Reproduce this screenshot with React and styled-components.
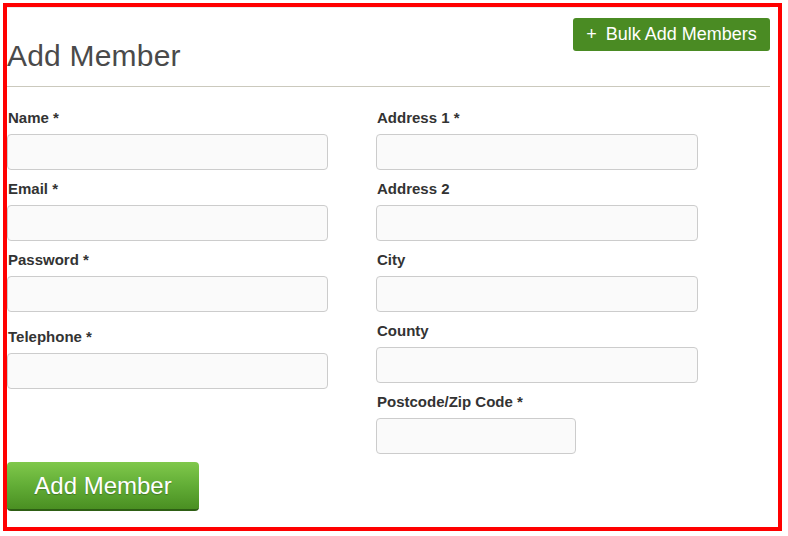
import React from "react";
import styled, { createGlobalStyle } from "styled-components";

const GlobalStyle = createGlobalStyle`
  html, body {
    margin: 0;
    padding: 0;
    background: #fff;
  }
  body {
    font-family: "Liberation Sans", Arial, Helvetica, sans-serif;
    color: #333;
  }
`;

const Frame = styled.div`
  margin: 3px;
  width: 779px;
  height: 528px;
  box-sizing: border-box;
  border: 4px solid #ff0000;
  overflow: hidden;
`;

const Content = styled.div`
  width: 763px;
  border-top: 1px solid #ececec;
`;

const Header = styled.div`
  display: flex;
  justify-content: space-between;
  align-items: flex-start;
  height: 78px;
  border-bottom: 1px solid #cbc9bd;
`;

const Title = styled.h1`
  align-self: flex-end;
  margin: 0 0 15px 0;
  font-size: 30px;
  line-height: 30px;
  font-weight: 300;
  color: #4a4a4a;
  letter-spacing: 0.2px;
`;

const BulkButton = styled.button`
  margin-top: 10px;
  width: 197px;
  height: 33px;
  padding: 0;
  border: none;
  border-radius: 3px;
  background: #4a8b23;
  color: #fff;
  font-family: "Liberation Sans", Arial, sans-serif;
  font-size: 18px;
  display: flex;
  align-items: center;
  justify-content: center;
  cursor: pointer;
`;

const Plus = styled.span`
  margin-right: 9px;
  font-size: 18px;
`;

const Form = styled.form`
  padding-top: 21px;
`;

const Columns = styled.div`
  display: grid;
  grid-template-columns: 321px 322px;
  column-gap: 48px;
  align-items: start;
`;

const Column = styled.div`
  display: flex;
  flex-direction: column;
  gap: 9px;
`;

const Field = styled.div`
  display: flex;
  flex-direction: column;
  margin-top: ${(p) => p.$offset || 0}px;
`;

const Label = styled.label`
  display: block;
  font-size: 15px;
  line-height: 20px;
  font-weight: 700;
  color: #333;
  margin-bottom: 6px;
  padding-left: 1px;
`;

const Input = styled.input`
  box-sizing: border-box;
  width: ${(p) => p.$width || "100%"};
  height: 36px;
  background: #fafafa;
  border: 1px solid #cccccc;
  border-radius: 4px;
  font-family: "Liberation Sans", Arial, sans-serif;
  font-size: 15px;
  padding: 0 8px;
  outline: none;
`;

const SubmitButton = styled.button`
  margin-top: 8px;
  width: 192px;
  height: 49px;
  padding: 0;
  border: none;
  border-bottom: 2px solid #2e5e14;
  border-radius: 4px;
  background: linear-gradient(to bottom, #80c84b 0%, #62ad36 50%, #4a8f22 100%);
  color: #fff;
  font-family: "Liberation Sans", Arial, sans-serif;
  font-size: 24px;
  text-shadow: 0 1px 1px rgba(0, 0, 0, 0.25);
  cursor: pointer;
`;

const leftFields = [
  { label: "Name *" },
  { label: "Email *" },
  { label: "Password *" },
  { label: "Telephone *", offset: 6 },
];

const rightFields = [
  { label: "Address 1 *" },
  { label: "Address 2" },
  { label: "City" },
  { label: "County" },
  { label: "Postcode/Zip Code *", width: "200px" },
];

function FormField({ label, offset, width }) {
  return (
    <Field $offset={offset}>
      <Label>{label}</Label>
      <Input type="text" $width={width} />
    </Field>
  );
}

export default function App() {
  return (
    <>
      <GlobalStyle />
      <Frame>
        <Content>
          <Header>
            <Title>Add Member</Title>
            <BulkButton type="button">
              <Plus>+</Plus>Bulk Add Members
            </BulkButton>
          </Header>
          <Form onSubmit={(e) => e.preventDefault()}>
            <Columns>
              <Column>
                {leftFields.map((f) => (
                  <FormField key={f.label} {...f} />
                ))}
              </Column>
              <Column>
                {rightFields.map((f) => (
                  <FormField key={f.label} {...f} />
                ))}
              </Column>
            </Columns>
            <SubmitButton type="submit">Add Member</SubmitButton>
          </Form>
        </Content>
      </Frame>
    </>
  );
}
